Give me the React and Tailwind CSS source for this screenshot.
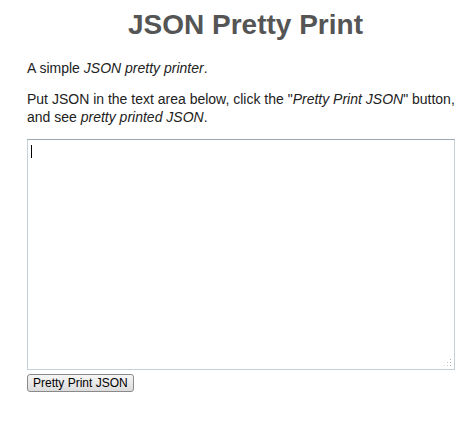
export default function App() {
  return (
    <div className="min-h-[430px] bg-white pl-[27px] pr-[19px] pt-[9px] font-['Liberation_Sans',Arial,sans-serif] text-[#222]">
      <h1 className="text-center text-[28px] leading-[32px] font-bold text-[#555] pl-[9px]">
        JSON Pretty Print
      </h1>
      <p className="mt-[18px] text-[14px] leading-[18px]">
        A simple <em>JSON pretty printer</em>.
      </p>
      <p className="mt-[13px] text-[14px] leading-[18px]">
        Put JSON in the text area below, click the "<em>Pretty Print JSON</em>" button, and see{" "}
        <em>pretty printed JSON</em>.
      </p>
      <div className="relative mt-[13px] w-[428px]">
        <textarea className="block h-[231px] w-full resize-none border border-[#c3d0d6] border-t-[#9aa9b0] bg-white p-1 text-[13px] outline-none" />
        <span className="pointer-events-none absolute left-[4px] top-[6px] h-[13px] w-px bg-black" />
        <svg className="pointer-events-none absolute bottom-[3px] right-[3px]" width="8" height="8" viewBox="0 0 8 8">
          <rect x="6" y="0" width="1" height="1" fill="#b5b5b5" />
          <rect x="6" y="3" width="1" height="1" fill="#b5b5b5" />
          <rect x="3" y="3" width="1" height="1" fill="#c5c5c5" />
          <rect x="6" y="6" width="1" height="1" fill="#b5b5b5" />
          <rect x="3" y="6" width="1" height="1" fill="#c5c5c5" />
          <rect x="0" y="6" width="1" height="1" fill="#d0d0d0" />
        </svg>
      </div>
      <button className="mt-[3px] h-[18px] rounded-[3px] border border-[#8a8a8a] bg-gradient-to-b from-[#f6f6f6] to-[#dcdcdc] px-[5px] text-[12px] leading-[14px] text-black">
        Pretty Print JSON
      </button>
    </div>
  );
}
